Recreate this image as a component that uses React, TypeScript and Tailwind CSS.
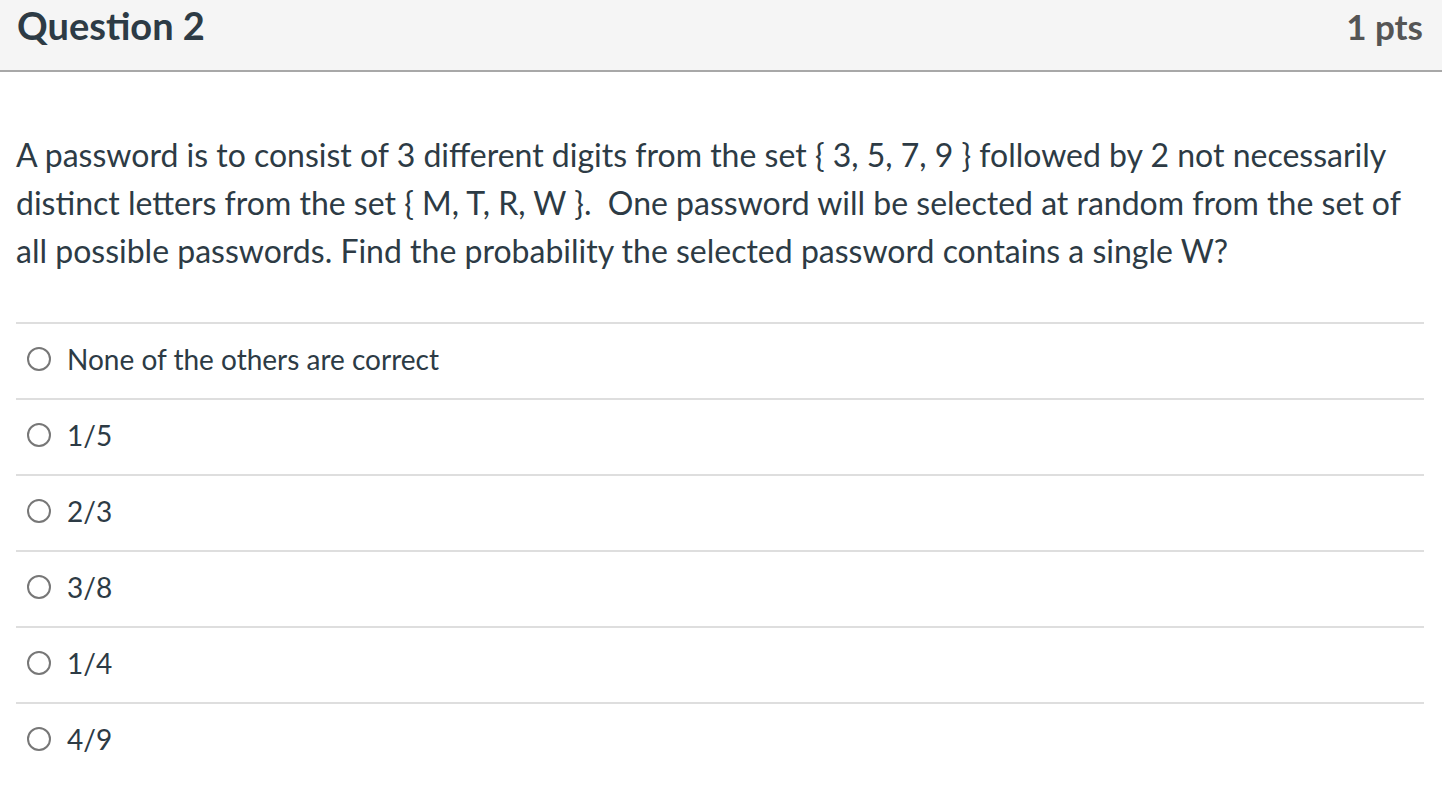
import React from "react";

const answers = ["None of the others are correct", "1/5", "2/3", "3/8", "1/4", "4/9"];

export default function App() {
  return (
    <div className="w-[1442px] h-[796px] bg-white overflow-hidden text-[#2d3b45]" style={{ fontFamily: "Lato, 'Open Sans', sans-serif" }}>
      <div className="h-[72px] bg-[#f5f5f5] border-b-2 border-[#a8a8a8] flex items-baseline justify-between pl-[17px] pr-[19px] pt-[6px]">
        <div className="text-[38px] font-bold leading-none text-[#2d3b45]">Question 2</div>
        <div className="text-[35px] font-bold leading-none text-[#555555]">1 pts</div>
      </div>
      <div className="px-[16px] pt-[59px]">
        <p className="text-[32px] leading-[48px] whitespace-nowrap">
          A password is to consist of 3 different digits from the set {"{"} 3, 5, 7, 9 {"}"} followed by 2 not necessarily
          <br />
          distinct letters from the set {"{"} M, T, R, W {"}"}.&nbsp; One password will be selected at random from the set of
          <br />
          all possible passwords. Find the probability the selected password contains a single W?
        </p>
        <div className="mt-[47px] w-[1408px]">
          {answers.map((a) => (
            <div key={a} className="border-t-2 border-[#dedede] h-[76px] flex items-center pl-[11px] pb-[4px]">
              <span className="w-[24px] h-[24px] rounded-full border-2 border-[#777777] mr-[16px] shrink-0" />
              <span className="text-[28px] leading-none">{a}</span>
            </div>
          ))}
        </div>
      </div>
    </div>
  );
}
